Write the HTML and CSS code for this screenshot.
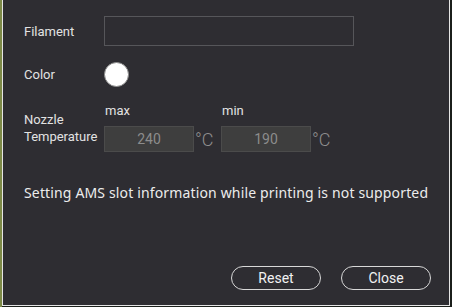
FILE: index.html
```html
<!DOCTYPE html>
<html lang="en">
<head>
<meta charset="UTF-8">
<meta name="viewport" content="width=device-width, initial-scale=1.0">
<title>AMS Slot</title>
<link rel="stylesheet" href="styles.css">
</head>
<body>

<div class="desktop">
    <div class="dialog">
        <div class="row filament-row">
            <label class="label">Filament</label>
            <div class="text-box"></div>
        </div>

        <div class="row color-row">
            <label class="label">Color</label>
            <div class="swatch"></div>
        </div>

        <div class="row temp-row">
            <label class="label temp-label">Nozzle<br>Temperature</label>
            <div class="temp-group">
                <span class="temp-caption">max</span>
                <div class="temp-field">
                    <div class="temp-box">240</div>
                    <span class="unit">&deg;C</span>
                </div>
            </div>
            <div class="temp-group">
                <span class="temp-caption">min</span>
                <div class="temp-field">
                    <div class="temp-box">190</div>
                    <span class="unit">&deg;C</span>
                </div>
            </div>
        </div>

        <p class="notice">Setting AMS slot information while printing is not supported</p>

        <div class="buttons">
            <button class="btn">Reset</button>
            <button class="btn">Close</button>
        </div>
    </div>
</div>

</body>
</html>
```

FILE: styles.css
```css
body {
    margin: 0;
    padding: 0;
    background-color: #1c1f1a;
    font-family: Roboto, "Noto Sans", sans-serif;
}
.desktop {
    width: 452px;
    height: 307px;
    background: linear-gradient(to right, #7d8a48 0, #7d8a48 2px, #1b1f1b 2px);
    overflow: hidden;
}
.dialog {
    margin-left: 2px;
    width: 446px;
    height: 305px;
    background-color: #2e2d32;
    border: 1px solid #e6e6e6;
    border-top: none;
    box-sizing: content-box;
    padding: 0;
    position: relative;
}
.row {
    display: flex;
    align-items: center;
    padding-left: 21px;
}
.label {
    width: 80px;
    font-size: 13px;
    color: #e2e2e2;
}
.filament-row {
    padding-top: 16px;
}
.text-box {
    width: 248px;
    height: 28px;
    border: 1px solid #56565a;
}
.color-row {
    margin-top: 16px;
}
.swatch {
    width: 23px;
    height: 23px;
    border-radius: 50%;
    background-color: #fff;
    border: 1px solid #8a8a8a;
}
.temp-row {
    margin-top: 16px;
    align-items: flex-start;
}
.temp-label {
    margin-top: 8px;
    line-height: 17px;
}
.temp-group {
    display: flex;
    flex-direction: column;
    width: 117px;
}
.temp-caption {
    font-size: 13px;
    color: #e2e2e2;
    padding-left: 1px;
    height: 23px;
    line-height: 16px;
}
.temp-field {
    display: flex;
    align-items: center;
}
.temp-box {
    width: 88px;
    height: 24px;
    line-height: 24px;
    background-color: #3e3e3e;
    border: 1px solid #4b4b4b;
    color: #8c8c8c;
    font-size: 14px;
    text-align: center;
}
.unit {
    font-size: 18px;
    font-weight: 300;
    color: #8e8e8e;
    margin-left: 1px;
}
.notice {
    margin: 31px 0 0 21px;
    font-family: "Noto Sans", sans-serif;
    font-size: 14px;
    letter-spacing: 0.15px;
    color: #ececec;
}
.buttons {
    position: absolute;
    right: 18px;
    bottom: 15px;
    display: flex;
    gap: 20px;
}
.btn {
    width: 90px;
    height: 24px;
    border: 1px solid #d8d8d8;
    border-radius: 12px;
    background: transparent;
    color: #f2f2f2;
    font-family: Roboto, sans-serif;
    font-size: 14px;
    padding: 0;
}
```
